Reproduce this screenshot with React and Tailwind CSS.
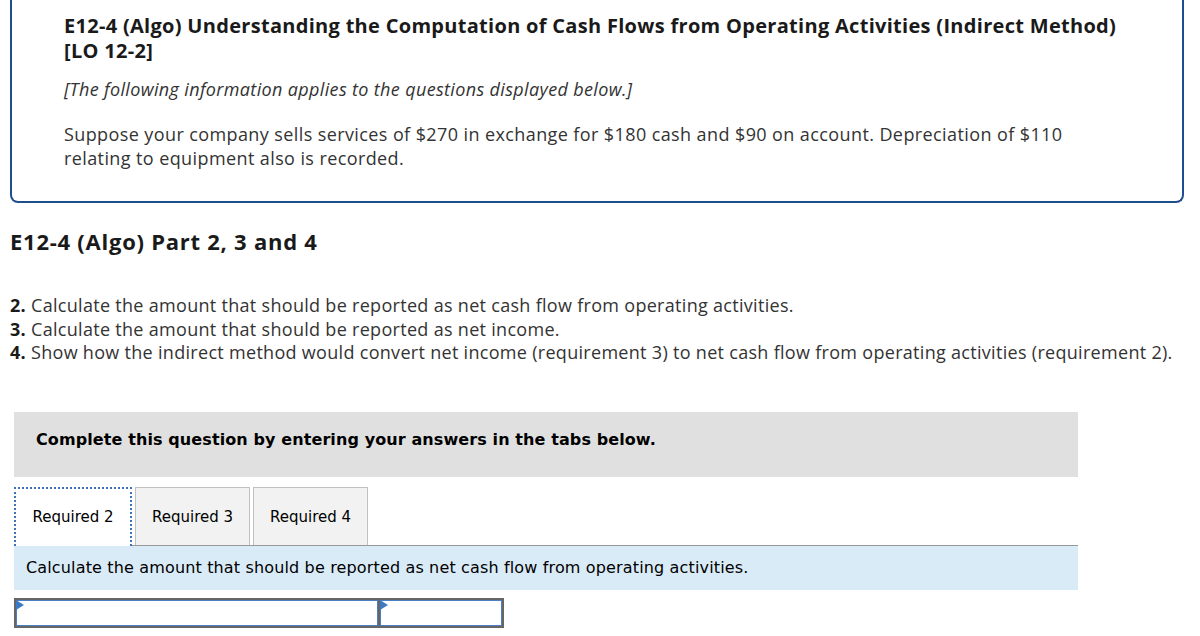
import React from "react";

const main = { fontFamily: "'Open Sans', Lato, sans-serif" };
const verd = { fontFamily: "'DejaVu Sans', Verdana, sans-serif" };

function Tri() {
  return (
    <svg className="absolute left-0 top-0" width="8" height="10" viewBox="0 0 8 10">
      <polygon points="0,0 8,5 0,10" fill="#3d7ac4" />
    </svg>
  );
}

export default function App() {
  return (
    <div className="w-[1200px] h-[636px] overflow-hidden bg-white text-[#212121]" style={main}>
      <div className="ml-[10px] w-[1174px] -mt-[10px] h-[213px] border-2 border-t-0 border-[#1f4e8c] rounded-b-[8px] pl-[52px] pt-[23px]">
        <h1 className="w-[1060px] text-[20px] leading-[25px] font-bold tracking-[0.3px] text-[#1a1a1a]">
          E12-4 (Algo) Understanding the Computation of Cash Flows from Operating Activities (Indirect Method) [LO 12-2]
        </h1>
        <p className="italic text-[18px] leading-[24px] mt-[14px] tracking-[0.35px] text-[#333]">[The following information applies to the questions displayed below.]</p>
        <p className="text-[18px] leading-[23.5px] mt-[22px] tracking-[0.4px] text-[#333] w-[1040px]">
          Suppose your company sells services of $270 in exchange for $180 cash and $90 on account. Depreciation of $110 relating to equipment also is recorded.
        </p>
      </div>
      <div className="pl-[10px]">
        <h2 className="text-[22px] leading-[24px] font-bold mt-[26px] tracking-[0.75px] text-[#1a1a1a]">E12-4 (Algo) Part 2, 3 and 4</h2>
        <div className="mt-[41px] text-[18px] leading-[23.5px] tracking-[0.3px] text-[#333]">
          <p><b className="text-[#1a1a1a]">2.</b> Calculate the amount that should be reported as net cash flow from operating activities.</p>
          <p><b className="text-[#1a1a1a]">3.</b> Calculate the amount that should be reported as net income.</p>
          <p><b className="text-[#1a1a1a]">4.</b> Show how the indirect method would convert net income (requirement 3) to net cash flow from operating activities (requirement 2).</p>
        </div>
      </div>
      <div className="ml-[14px] w-[1064px] mt-[47px]" style={verd}>
        <div className="h-[65px] bg-[#e0e0e0] flex items-center pl-[22px] pb-[8px] text-[16px] font-bold tracking-[0.1px] text-black">
          Complete this question by entering your answers in the tabs below.
        </div>
        <div className="mt-[10px] flex items-end border-b border-[#999] h-[59px]">
          <div className="w-[118px] h-[59px] -mb-px border-2 border-b-0 border-dotted border-[#3d72b8] bg-white flex items-center justify-center text-[15px] text-black">Required 2</div>
          <div className="ml-[3px] w-[115px] h-[58px] border border-b-0 border-[#c0c0c0] bg-[#f2f2f2] flex items-center justify-center pt-[2px] text-[15px] text-black">Required 3</div>
          <div className="ml-[3px] w-[115px] h-[58px] border border-b-0 border-[#c0c0c0] bg-[#f2f2f2] flex items-center justify-center pt-[2px] text-[15px] text-black">Required 4</div>
        </div>
        <div className="h-[44px] bg-[#daebf8] flex items-center pl-[12px] text-[16px] tracking-[0.15px] text-black">
          Calculate the amount that should be reported as net cash flow from operating activities.
        </div>
        <div className="mt-[8px] flex">
          <div className="relative w-[366px] h-[30px] border-2 border-[#666]">
            <div className="w-full h-full border border-[#4a7fc1] bg-white"></div>
            <Tri />
          </div>
          <div className="relative -ml-[2px] w-[126px] h-[30px] border-2 border-[#666]">
            <div className="w-full h-full border border-[#4a7fc1] bg-white"></div>
            <Tri />
          </div>
        </div>
      </div>
    </div>
  );
}
